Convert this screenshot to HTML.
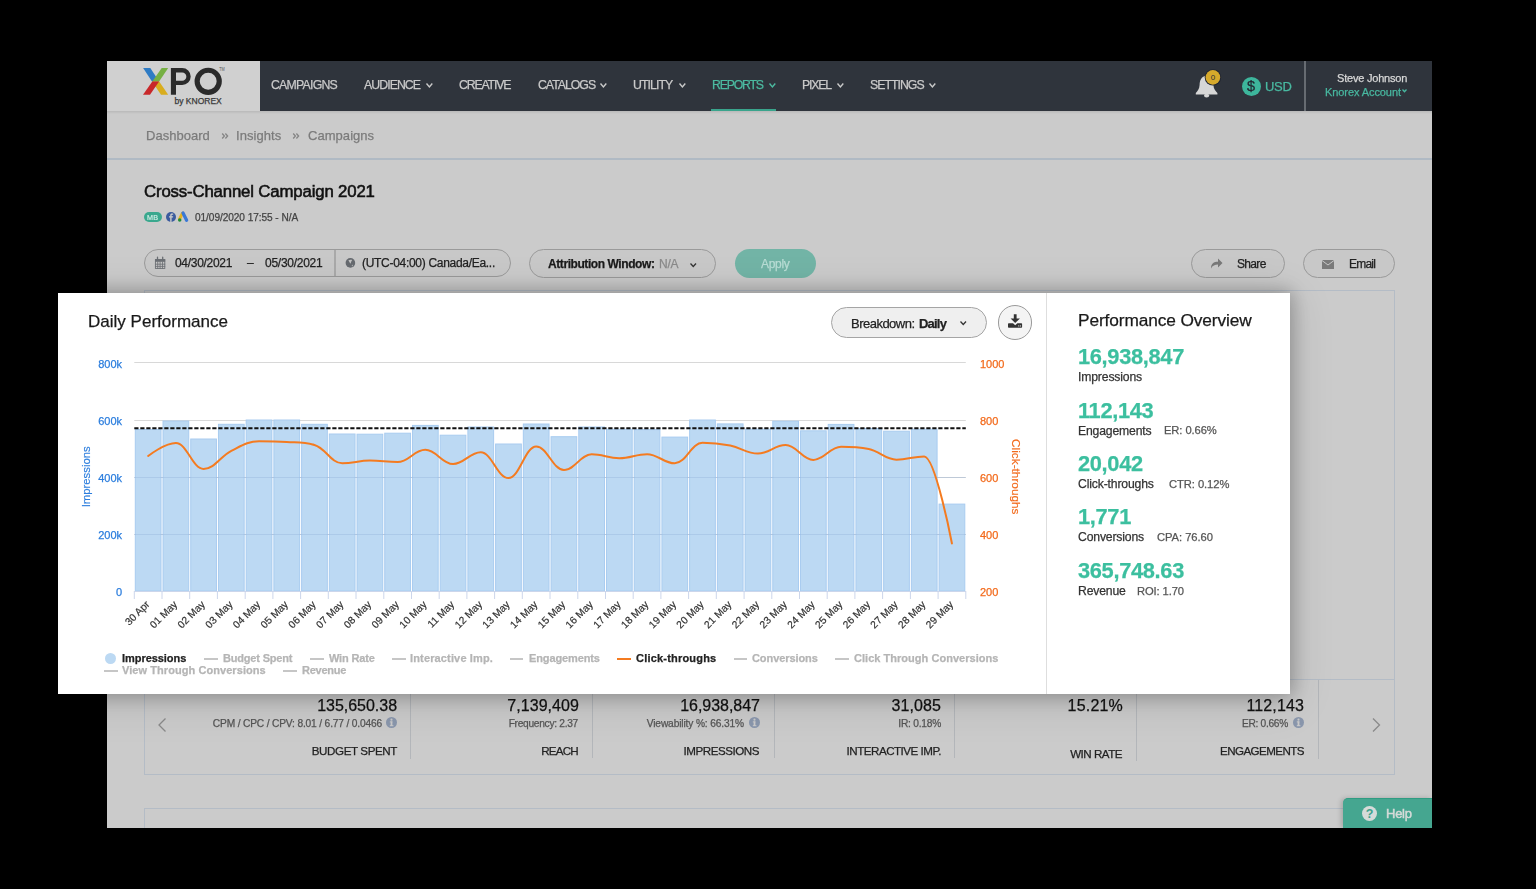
<!DOCTYPE html>
<html><head><meta charset="utf-8">
<style>
*{margin:0;padding:0;box-sizing:border-box}
html,body{width:1536px;height:889px;background:#000;overflow:hidden;font-family:"Liberation Sans",sans-serif;position:relative}
.a{position:absolute}
.t{position:absolute;white-space:nowrap;line-height:1;-webkit-text-stroke-width:0.25px;will-change:transform}
.chev{display:inline-block;width:5px;height:5px;border-right:1.3px solid currentColor;border-bottom:1.3px solid currentColor;transform:rotate(45deg);margin-left:5px;position:relative;top:-3px}
.xl{font-family:"Liberation Sans",sans-serif;font-size:10.3px;fill:#333;stroke:#333;stroke-width:0.2px}
.yl{font-family:"Liberation Sans",sans-serif;font-size:11px;fill:#2b7ddd;stroke:#2b7ddd;stroke-width:0.25px}
.yr{font-family:"Liberation Sans",sans-serif;font-size:11px;fill:#f26a1b;stroke:#f26a1b;stroke-width:0.25px}
.tl{font-family:"Liberation Sans",sans-serif;font-size:11.3px;fill:#2b7ddd;stroke:#2b7ddd;stroke-width:0.15px}
.tr{font-family:"Liberation Sans",sans-serif;font-size:11.8px;fill:#f26a1b;stroke:#f26a1b;stroke-width:0.15px}
</style></head><body>
<div class="a" style="left:107px;top:61px;width:1325px;height:767px;background:#cbcbcb"></div>\n<div class="a" style="left:107px;top:61px;width:153px;height:50px;background:#d0d0d0"></div>\n<div class="a" style="left:107px;top:111px;width:1325px;height:3px;background:linear-gradient(#b9b9b9,#cbcbcb)"></div>\n<div class="a" style="left:260px;top:61px;width:1172px;height:50px;background:#2f343c"></div>\n<svg class="a" style="left:138px;top:62px" width="92" height="46" viewBox="138 62 92 46">
<polygon points="143.1,68 150.3,68 159.2,81.4 152,81.4" fill="#2e7bc4"/>
<polygon points="161.7,68 168.2,68 159.1,81.4 152.3,81.4" fill="#76b043"/>
<polygon points="152,81.4 159.2,81.4 168.2,94.8 161,94.8" fill="#d9ad1e"/>
<polygon points="152.3,81.4 159.1,81.4 150,94.8 143,94.8" fill="#c8282a"/>
<path fill-rule="evenodd" fill="#2b2b2b" d="M170.9,68 H182.2 A8.5,8.5 0 0 1 182.2,85 H176 V94.8 H170.9 Z M176,72.5 H182.2 A4.15,4.15 0 0 1 182.2,80.8 H176 Z"/>
<circle cx="208.2" cy="81.3" r="11.05" fill="none" stroke="#2b2b2b" stroke-width="5.2"/>
<text x="219.3" y="71" font-family="Liberation Sans" font-size="4.5" fill="#555" textLength="5.5" lengthAdjust="spacingAndGlyphs">TM</text>
<text x="174.5" y="104.2" font-family="Liberation Sans" font-size="8.2" fill="#3a3a3a" stroke="#3a3a3a" stroke-width="0.25" textLength="47.3" lengthAdjust="spacingAndGlyphs">by KNOREX</text>
</svg>\n<div class="t" style="top:78.79px;font-size:12.3px;color:#cacaca;letter-spacing:-0.7625000000000011px;left:271.00px;">CAMPAIGNS</div>\n<div class="t" style="top:78.79px;font-size:12.3px;color:#cacaca;letter-spacing:-0.9357142857142853px;left:364.00px;">AUDIENCE</div>\n<svg class="a" style="left:424.5px;top:81.6px" width="8.8" height="6.4" viewBox="-1 -1 8.8 6.4"><path d="M0.5 0.5 L3.40 3.90 L6.30 0.5" fill="none" stroke="#cacaca" stroke-width="1.4"/></svg>\n<div class="t" style="top:78.79px;font-size:12.3px;color:#cacaca;letter-spacing:-1.171428571428572px;left:458.60px;">CREATIVE</div>\n<div class="t" style="top:78.79px;font-size:12.3px;color:#cacaca;letter-spacing:-1.0071428571428578px;left:537.50px;">CATALOGS</div>\n<svg class="a" style="left:599.0px;top:81.6px" width="8.8" height="6.4" viewBox="-1 -1 8.8 6.4"><path d="M0.5 0.5 L3.40 3.90 L6.30 0.5" fill="none" stroke="#cacaca" stroke-width="1.4"/></svg>\n<div class="t" style="top:78.79px;font-size:12.3px;color:#cacaca;letter-spacing:-0.9166666666666666px;left:633.00px;">UTILITY</div>\n<svg class="a" style="left:678.0px;top:81.6px" width="8.8" height="6.4" viewBox="-1 -1 8.8 6.4"><path d="M0.5 0.5 L3.40 3.90 L6.30 0.5" fill="none" stroke="#cacaca" stroke-width="1.4"/></svg>\n<div class="t" style="top:78.79px;font-size:12.3px;color:#4cbba1;letter-spacing:-1.1916666666666664px;left:712.30px;">REPORTS</div>\n<svg class="a" style="left:767.5px;top:81.6px" width="8.8" height="6.4" viewBox="-1 -1 8.8 6.4"><path d="M0.5 0.5 L3.40 3.90 L6.30 0.5" fill="none" stroke="#4cbba1" stroke-width="1.4"/></svg>\n<div class="t" style="top:78.79px;font-size:12.3px;color:#cacaca;letter-spacing:-1.2125000000000004px;left:802.00px;">PIXEL</div>\n<svg class="a" style="left:836.0px;top:81.6px" width="8.8" height="6.4" viewBox="-1 -1 8.8 6.4"><path d="M0.5 0.5 L3.40 3.90 L6.30 0.5" fill="none" stroke="#cacaca" stroke-width="1.4"/></svg>\n<div class="t" style="top:78.79px;font-size:12.3px;color:#cacaca;letter-spacing:-0.9857142857142855px;left:869.80px;">SETTINGS</div>\n<svg class="a" style="left:928.2px;top:81.6px" width="8.8" height="6.4" viewBox="-1 -1 8.8 6.4"><path d="M0.5 0.5 L3.40 3.90 L6.30 0.5" fill="none" stroke="#cacaca" stroke-width="1.4"/></svg>\n<div class="a" style="left:711px;top:108.5px;width:65px;height:2.5px;background:#3aa48c"></div>\n<svg class="a" style="left:1190px;top:64px" width="36" height="36" viewBox="1190 64 36 36">
<path d="M1206.5 76 C1201 76.2 1199.8 80.5 1199.6 85 C1199.4 89 1197.5 91.2 1195.8 93 L1195.8 94.6 L1217.4 94.6 L1217.4 93 C1215.6 91.2 1213.6 89 1213.4 85 C1213.2 80.5 1212 76.2 1206.5 76 Z" fill="#d6d6d6"/>
<ellipse cx="1206.6" cy="95.6" rx="2.6" ry="1.9" fill="#d6d6d6"/>
<circle cx="1212.9" cy="77.4" r="8.2" fill="#1f2430"/>
<circle cx="1212.9" cy="77.4" r="7.3" fill="#d6a92b"/>
<text x="1212.9" y="80.3" font-family="Liberation Sans" font-size="8" fill="#2a2f3a" text-anchor="middle">0</text>
</svg>\n<div class="a" style="left:1242px;top:76.5px;width:19px;height:19px;border-radius:50%;background:#3db69c"></div>\n<div class="t" style="top:79.03px;font-size:14.5px;color:#222831;left:1247.30px;">$</div>\n<div class="t" style="top:79.70px;font-size:13px;color:#49b9a1;letter-spacing:-0.3249999999999993px;left:1264.60px;">USD</div>\n<div class="a" style="left:1304px;top:61px;width:2px;height:50px;background:#676c72"></div>\n<div class="t" style="top:72.69px;font-size:11px;color:#d8d8d8;letter-spacing:-0.1999999999999993px;left:1336.60px;">Steve Johnson</div>\n<div class="t" style="top:86.89px;font-size:11px;color:#48b8a0;letter-spacing:-0.08076923076923055px;left:1324.70px;">Knorex Account</div>\n<svg class="a" style="left:1400.8px;top:87.6px" width="7" height="5.2" viewBox="-1 -1 7 5.2"><path d="M0.5 0.5 L2.50 2.70 L4.50 0.5" fill="none" stroke="#48b8a0" stroke-width="1.3"/></svg>\n<div class="t" style="top:129.10px;font-size:13px;color:#7b7b7b;letter-spacing:0.012500000000000178px;left:146.30px;">Dashboard</div>\n<svg class="a" style="left:220.5px;top:132px" width="8" height="8" viewBox="0 0 8 8"><path d="M1.2 1.5 L3.4 4 L1.2 6.5 M4.4 1.5 L6.6 4 L4.4 6.5" fill="none" stroke="#858585" stroke-width="1.3"/></svg>\n<div class="t" style="top:129.10px;font-size:13px;color:#7b7b7b;letter-spacing:0.05714285714285795px;left:236.30px;">Insights</div>\n<svg class="a" style="left:292px;top:132px" width="8" height="8" viewBox="0 0 8 8"><path d="M1.2 1.5 L3.4 4 L1.2 6.5 M4.4 1.5 L6.6 4 L4.4 6.5" fill="none" stroke="#858585" stroke-width="1.3"/></svg>\n<div class="t" style="top:129.10px;font-size:13px;color:#7b7b7b;letter-spacing:0.04374999999999929px;left:307.90px;">Campaigns</div>\n<div class="a" style="left:107px;top:158px;width:1325px;height:1.5px;background:#b0bac4"></div>\n<div class="t" style="top:184.28px;font-size:16.8px;color:#111;letter-spacing:-0.15961538461538483px;left:144.00px;-webkit-text-stroke-width:0.55px;">Cross-Channel Campaign 2021</div>\n<div class="a" style="left:144px;top:212px;width:18px;height:10px;border-radius:5px;background:#3aa88e"></div>\n<div class="t" style="top:213.61px;font-size:7.2px;color:#d9f0ea;letter-spacing:0.1999999999999993px;left:147.40px;-webkit-text-stroke-width:0.15px;">MB</div>\n<svg class="a" style="left:166px;top:212px" width="10" height="10" viewBox="0 0 10 10"><circle cx="5" cy="5" r="5" fill="#3b5b9e"/><path d="M5.6 10 V5.6 H7 L7.2 4.2 H5.6 V3.4 C5.6 3 5.8 2.8 6.2 2.8 H7.2 V1.5 H5.9 C4.7 1.5 4.2 2.2 4.2 3.2 V4.2 H3 V5.6 H4.2 V10 Z" fill="#cbcbcb"/></svg>\n<svg class="a" style="left:175px;top:209px" width="16" height="15" viewBox="175 209 16 15"><path d="M182.4 213.2 L179.6 219.2" stroke="#e8b21f" stroke-width="3" stroke-linecap="round"/><circle cx="179.7" cy="219.9" r="1.75" fill="#1f8c3b"/><path d="M183 213 L186.6 220.3" stroke="#3a78d6" stroke-width="3.3" stroke-linecap="round"/></svg>\n<div class="t" style="top:212.65px;font-size:10.1px;color:#444;letter-spacing:-0.05952380952380952px;left:194.70px;">01/09/2020 17:55 - N/A</div>\n<div class="a" style="left:144px;top:249px;width:367px;height:28px;border:1px solid #9a9a9a;border-radius:14px;background:#c8c8c8"></div>\n<div class="a" style="left:334px;top:250px;width:2px;height:26px;background:#a9a9a9"></div>\n<svg class="a" style="left:152px;top:255px" width="16" height="16" viewBox="152 255 16 16">
<rect x="155.4" y="259.6" width="9.4" height="8.8" fill="none" stroke="#6b6f74" stroke-width="0.9"/>
<rect x="155" y="259.2" width="10.2" height="2.6" fill="#6b6f74"/>
<path d="M157.5 257.2 V260.2 M162.7 257.2 V260.2" stroke="#6b6f74" stroke-width="1.3" stroke-linecap="round"/>
<path d="M155 264.2 H165.2 M155 266.4 H165.2 M157.7 261.5 V268.8 M160.1 261.5 V268.8 M162.5 261.5 V268.8" stroke="#6b6f74" stroke-width="0.8"/>
</svg>\n<div class="t" style="top:257.24px;font-size:12px;color:#222;letter-spacing:-0.3055555555555556px;left:175.00px;">04/30/2021</div>\n<div class="t" style="top:257.24px;font-size:12px;color:#222;letter-spacing:-1.1000000000000005px;left:246.70px;">–</div>\n<div class="t" style="top:257.24px;font-size:12px;color:#222;letter-spacing:-0.26111111111111046px;left:265.30px;">05/30/2021</div>\n<svg class="a" style="left:344px;top:256px" width="14" height="14" viewBox="344 256 14 14"><circle cx="350.4" cy="262.9" r="4.8" fill="#666a6f"/><path d="M348.4 260.2 C349.5 259.6 351 259.4 352.2 260 L351.3 261.6 L350.5 263.8 L349.5 262.2 Z M351.6 265.5 L353 264.6 L352.5 266.6 Z" fill="#c2c2c2"/></svg>\n<div class="t" style="top:257.24px;font-size:12px;color:#222;letter-spacing:-0.29782608695652274px;left:361.80px;">(UTC-04:00) Canada/Ea...</div>\n<div class="a" style="left:529px;top:249px;width:187px;height:29px;border:1px solid #9a9a9a;border-radius:15px;background:#c8c8c8"></div>\n<div class="t" style="top:258.14px;font-size:12px;color:#1a1a1a;font-weight:bold;letter-spacing:-0.42499999999999954px;left:548.30px;">Attribution Window:</div>\n<div class="t" style="top:258.14px;font-size:12px;color:#8a8a8a;letter-spacing:-0.1999999999999993px;left:658.80px;">N/A</div>\n<svg class="a" style="left:689.0px;top:262.2px" width="8.5" height="6" viewBox="-1 -1 8.5 6"><path d="M0.5 0.5 L3.25 3.50 L6.00 0.5" fill="none" stroke="#333" stroke-width="1.3"/></svg>\n<div class="a" style="left:734.5px;top:249px;width:81px;height:29px;border-radius:15px;background:#72b4a6"></div>\n<div class="t" style="top:258.44px;font-size:12px;color:#b9ddd5;letter-spacing:-0.2999999999999998px;left:760.60px;">Apply</div>\n<div class="a" style="left:1191px;top:249px;width:94px;height:29px;border:1px solid #9a9a9a;border-radius:15px;background:#c8c8c8"></div>\n<svg class="a" style="left:1209.5px;top:258px" width="13" height="11" viewBox="0 0 13 11"><path d="M1 10.5 C1 5.5 3.8 3.8 8 3.8 L8 0.5 L12.5 5 L8 9.5 L8 6.5 C4.8 6.5 2.5 7.5 1 10.5 Z" fill="#787878"/></svg>\n<div class="t" style="top:258.04px;font-size:12px;color:#222;letter-spacing:-0.6749999999999998px;left:1236.50px;">Share</div>\n<div class="a" style="left:1303px;top:249px;width:92px;height:29px;border:1px solid #9a9a9a;border-radius:15px;background:#c8c8c8"></div>\n<svg class="a" style="left:1322px;top:260px" width="12" height="9" viewBox="0 0 12 9"><rect x="0" y="0" width="12" height="9" fill="#7a7a7a"/><path d="M0 0.5 L6 5 L12 0.5" stroke="#c8c8c8" stroke-width="1" fill="none"/></svg>\n<div class="t" style="top:258.04px;font-size:12px;color:#222;letter-spacing:-0.7750000000000004px;left:1348.80px;">Email</div>\n<div class="a" style="left:144px;top:290px;width:1251px;height:485px;border:1px solid #b4bcc6"></div>\n<div class="a" style="left:144px;top:679px;width:1251px;height:1px;background:#b4bcc6"></div>\n<div class="a" style="left:144px;top:808px;width:1251px;height:20px;border:1px solid #b4bcc6;border-bottom:none"></div>\n<svg class="a" style="left:157px;top:717px" width="11" height="16" viewBox="0 0 11 16"><path d="M8.5 1.5 L2 8 L8.5 14.5" stroke="#8a8a8a" stroke-width="1.3" fill="none"/></svg>\n<svg class="a" style="left:1371px;top:716.5px" width="11" height="16" viewBox="0 0 11 16"><path d="M2 1.5 L8.5 8 L2 14.5" stroke="#8a8a8a" stroke-width="1.3" fill="none"/></svg>\n<div class="a" style="left:409.5px;top:680px;width:1px;height:78.5px;background:#b3b6ba"></div>\n<div class="a" style="left:592.2px;top:680px;width:1px;height:78px;background:#b3b6ba"></div>\n<div class="a" style="left:773.6px;top:680px;width:1px;height:78px;background:#b3b6ba"></div>\n<div class="a" style="left:954.4px;top:680px;width:1px;height:78px;background:#b3b6ba"></div>\n<div class="a" style="left:1136.3px;top:680px;width:1px;height:80.5px;background:#b3b6ba"></div>\n<div class="a" style="left:1317.7px;top:680px;width:1px;height:79px;background:#b3b6ba"></div>\n<div class="t" style="top:698.46px;font-size:16px;color:#111;letter-spacing:-0.03333333333333302px;left:-202.86px;width:600px;text-align:right;">135,650.38</div>\n<div class="t" style="top:719.37px;font-size:10.2px;color:#555;letter-spacing:-0.16249999999999984px;left:-218.45px;width:600px;text-align:right;">CPM / CPC / CPV: 8.01 / 6.77 / 0.0466</div>\n<svg class="a" style="left:386.2px;top:717.3px" width="11" height="11" viewBox="0 0 11 11"><circle cx="5.5" cy="5.5" r="5.5" fill="#8a97ad"/><rect x="4.6" y="4.4" width="1.8" height="4.6" fill="#cbcbcb"/><rect x="3.8" y="4.4" width="2.6" height="1" fill="#cbcbcb"/><rect x="3.8" y="8.2" width="3.6" height="1" fill="#cbcbcb"/><circle cx="5.5" cy="2.7" r="1.1" fill="#cbcbcb"/></svg>\n<div class="t" style="top:745.28px;font-size:11.6px;color:#222;letter-spacing:-0.39545454545454495px;left:-203.22px;width:600px;text-align:right;">BUDGET SPENT</div>\n<div class="t" style="top:698.46px;font-size:16px;color:#111;letter-spacing:0.0625px;left:-21.36px;width:600px;text-align:right;">7,139,409</div>\n<div class="t" style="top:719.37px;font-size:10.2px;color:#555;letter-spacing:-0.2857142857142857px;left:-21.68px;width:600px;text-align:right;">Frequency: 2.37</div>\n<div class="t" style="top:745.08px;font-size:11.6px;color:#222;letter-spacing:-0.75px;left:-22.14px;width:600px;text-align:right;">REACH</div>\n<div class="t" style="top:698.46px;font-size:16px;color:#111;letter-spacing:-0.02222222222222096px;left:159.66px;width:600px;text-align:right;">16,938,847</div>\n<div class="t" style="top:719.37px;font-size:10.2px;color:#555;letter-spacing:-0.13250000000000028px;left:144.08px;width:600px;text-align:right;">Viewability %: 66.31%</div>\n<svg class="a" style="left:748.7px;top:717.3px" width="11" height="11" viewBox="0 0 11 11"><circle cx="5.5" cy="5.5" r="5.5" fill="#8a97ad"/><rect x="4.6" y="4.4" width="1.8" height="4.6" fill="#cbcbcb"/><rect x="3.8" y="4.4" width="2.6" height="1" fill="#cbcbcb"/><rect x="3.8" y="8.2" width="3.6" height="1" fill="#cbcbcb"/><circle cx="5.5" cy="2.7" r="1.1" fill="#cbcbcb"/></svg>\n<div class="t" style="top:745.08px;font-size:11.6px;color:#222;letter-spacing:-0.45499999999999974px;left:159.27px;width:600px;text-align:right;">IMPRESSIONS</div>\n<div class="t" style="top:698.46px;font-size:16px;color:#111;letter-spacing:0.10999999999999943px;left:341.40px;width:600px;text-align:right;">31,085</div>\n<div class="t" style="top:719.37px;font-size:10.2px;color:#555;letter-spacing:-0.22499999999999964px;left:341.06px;width:600px;text-align:right;">IR: 0.18%</div>\n<div class="t" style="top:745.08px;font-size:11.6px;color:#222;letter-spacing:-0.48333333333333334px;left:340.84px;width:600px;text-align:right;">INTERACTIVE IMP.</div>\n<div class="t" style="top:698.46px;font-size:16px;color:#111;letter-spacing:0.19000000000000056px;left:522.71px;width:600px;text-align:right;">15.21%</div>\n<div class="t" style="top:747.68px;font-size:11.6px;color:#222;letter-spacing:-0.49285714285714327px;left:522.01px;width:600px;text-align:right;">WIN RATE</div>\n<div class="t" style="top:698.46px;font-size:16px;color:#111;letter-spacing:0.125px;left:704.32px;width:600px;text-align:right;">112,143</div>\n<div class="t" style="top:719.37px;font-size:10.2px;color:#555;letter-spacing:-0.2937500000000002px;left:688.41px;width:600px;text-align:right;">ER: 0.66%</div>\n<svg class="a" style="left:1293.2px;top:717.3px" width="11" height="11" viewBox="0 0 11 11"><circle cx="5.5" cy="5.5" r="5.5" fill="#8a97ad"/><rect x="4.6" y="4.4" width="1.8" height="4.6" fill="#cbcbcb"/><rect x="3.8" y="4.4" width="2.6" height="1" fill="#cbcbcb"/><rect x="3.8" y="8.2" width="3.6" height="1" fill="#cbcbcb"/><circle cx="5.5" cy="2.7" r="1.1" fill="#cbcbcb"/></svg>\n<div class="t" style="top:745.08px;font-size:11.6px;color:#222;letter-spacing:-0.5650000000000006px;left:703.62px;width:600px;text-align:right;">ENGAGEMENTS</div>\n<div class="a" style="left:1342.5px;top:797.5px;width:89.5px;height:30.5px;background:#45a690;border-top:1px solid #2f9c82;border-radius:5px 0 0 0;box-shadow:-2px 0 5px rgba(0,0,0,0.18)"></div>\n<svg class="a" style="left:1361.5px;top:805.5px" width="15" height="15" viewBox="0 0 15 15"><circle cx="7.5" cy="7.5" r="7.5" fill="#d6dbd9"/><text x="7.6" y="12" font-family="Liberation Sans" font-weight="bold" font-size="12.5" fill="#3fa38e" text-anchor="middle">?</text></svg>\n<div class="t" style="top:807.00px;font-size:13px;color:#d6dbd9;letter-spacing:-0.25px;left:1385.70px;-webkit-text-stroke-width:0.45px;">Help</div>\n<div class="a" style="left:58px;top:293px;width:1232px;height:401px;background:#fff;box-shadow:0 0 18px 2px rgba(0,0,0,0.26),0 6px 40px 4px rgba(0,0,0,0.12)"></div>\n<div class="a" style="left:1045.5px;top:293px;width:1px;height:401px;background:#dedede"></div>\n<div class="t" style="top:312.91px;font-size:17px;color:#1a1a1a;letter-spacing:0.009375000000000355px;left:87.50px;">Daily Performance</div>\n<div class="a" style="left:831px;top:307px;width:156px;height:31px;border:1px solid #a5a5a5;border-radius:16px;background:#efefef"></div>\n<div class="t" style="top:316.60px;font-size:13px;color:#222;letter-spacing:-0.5166666666666673px;left:851.10px;">Breakdown:</div>\n<div class="t" style="top:316.60px;font-size:13px;color:#222;font-weight:bold;letter-spacing:-0.7875000000000005px;left:919.10px;">Daily</div>\n<svg class="a" style="left:959.0px;top:320.3px" width="8.5" height="6" viewBox="-1 -1 8.5 6"><path d="M0.5 0.5 L3.25 3.50 L6.00 0.5" fill="none" stroke="#333" stroke-width="1.3"/></svg>\n<div class="a" style="left:998px;top:305.4px;width:34.4px;height:34.4px;border:1px solid #9a9a9a;border-radius:50%;background:#f4f4f4"></div>\n<svg class="a" style="left:1005px;top:311px" width="20" height="20" viewBox="1005 311 20 20">
<path d="M1013.8 314.2 H1016.6 V318.6 H1019.9 L1015.2 322.9 L1010.6 318.6 H1013.8 Z" fill="#333"/>
<path d="M1008.8 323.2 H1013 L1015.2 325.2 L1017.4 323.2 H1021.3 Q1022.1 323.2 1022.1 324 V326.9 Q1022.1 327.7 1021.3 327.7 H1008.8 Q1008 327.7 1008 326.9 V324 Q1008 323.2 1008.8 323.2 Z" fill="#333"/>
<circle cx="1018.8" cy="325.9" r="0.55" fill="#eee"/><circle cx="1020.4" cy="325.9" r="0.55" fill="#eee"/>
</svg>\n<svg class="a" style="left:58px;top:293px" width="988" height="401" viewBox="58 293 988 401"><line x1="134.3" y1="534.5" x2="965.8" y2="534.5" stroke="#d8d8d8" stroke-width="1"/>
<line x1="134.3" y1="477.5" x2="965.8" y2="477.5" stroke="#d8d8d8" stroke-width="1"/>
<line x1="134.3" y1="420.5" x2="965.8" y2="420.5" stroke="#d8d8d8" stroke-width="1"/>
<line x1="134.3" y1="362.5" x2="965.8" y2="362.5" stroke="#d8d8d8" stroke-width="1"/>
<rect x="135.30" y="429.5" width="25.72" height="161.5" fill="#bcd9f3" stroke="#a9ccf0" stroke-width="1"/>
<rect x="163.02" y="421.0" width="25.72" height="170.0" fill="#bcd9f3" stroke="#a9ccf0" stroke-width="1"/>
<rect x="190.73" y="439.0" width="25.72" height="152.0" fill="#bcd9f3" stroke="#a9ccf0" stroke-width="1"/>
<rect x="218.45" y="424.3" width="25.72" height="166.7" fill="#bcd9f3" stroke="#a9ccf0" stroke-width="1"/>
<rect x="246.17" y="420.0" width="25.72" height="171.0" fill="#bcd9f3" stroke="#a9ccf0" stroke-width="1"/>
<rect x="273.88" y="420.0" width="25.72" height="171.0" fill="#bcd9f3" stroke="#a9ccf0" stroke-width="1"/>
<rect x="301.60" y="424.3" width="25.72" height="166.7" fill="#bcd9f3" stroke="#a9ccf0" stroke-width="1"/>
<rect x="329.32" y="434.0" width="25.72" height="157.0" fill="#bcd9f3" stroke="#a9ccf0" stroke-width="1"/>
<rect x="357.03" y="434.2" width="25.72" height="156.8" fill="#bcd9f3" stroke="#a9ccf0" stroke-width="1"/>
<rect x="384.75" y="433.2" width="25.72" height="157.8" fill="#bcd9f3" stroke="#a9ccf0" stroke-width="1"/>
<rect x="412.47" y="425.4" width="25.72" height="165.6" fill="#bcd9f3" stroke="#a9ccf0" stroke-width="1"/>
<rect x="440.18" y="435.2" width="25.72" height="155.8" fill="#bcd9f3" stroke="#a9ccf0" stroke-width="1"/>
<rect x="467.90" y="427.0" width="25.72" height="164.0" fill="#bcd9f3" stroke="#a9ccf0" stroke-width="1"/>
<rect x="495.62" y="444.0" width="25.72" height="147.0" fill="#bcd9f3" stroke="#a9ccf0" stroke-width="1"/>
<rect x="523.33" y="424.0" width="25.72" height="167.0" fill="#bcd9f3" stroke="#a9ccf0" stroke-width="1"/>
<rect x="551.05" y="436.7" width="25.72" height="154.3" fill="#bcd9f3" stroke="#a9ccf0" stroke-width="1"/>
<rect x="578.77" y="427.0" width="25.72" height="164.0" fill="#bcd9f3" stroke="#a9ccf0" stroke-width="1"/>
<rect x="606.48" y="429.3" width="25.72" height="161.7" fill="#bcd9f3" stroke="#a9ccf0" stroke-width="1"/>
<rect x="634.20" y="429.6" width="25.72" height="161.4" fill="#bcd9f3" stroke="#a9ccf0" stroke-width="1"/>
<rect x="661.92" y="437.1" width="25.72" height="153.9" fill="#bcd9f3" stroke="#a9ccf0" stroke-width="1"/>
<rect x="689.63" y="420.0" width="25.72" height="171.0" fill="#bcd9f3" stroke="#a9ccf0" stroke-width="1"/>
<rect x="717.35" y="423.9" width="25.72" height="167.1" fill="#bcd9f3" stroke="#a9ccf0" stroke-width="1"/>
<rect x="745.07" y="429.2" width="25.72" height="161.8" fill="#bcd9f3" stroke="#a9ccf0" stroke-width="1"/>
<rect x="772.78" y="421.2" width="25.72" height="169.8" fill="#bcd9f3" stroke="#a9ccf0" stroke-width="1"/>
<rect x="800.50" y="430.8" width="25.72" height="160.2" fill="#bcd9f3" stroke="#a9ccf0" stroke-width="1"/>
<rect x="828.22" y="424.4" width="25.72" height="166.6" fill="#bcd9f3" stroke="#a9ccf0" stroke-width="1"/>
<rect x="855.93" y="428.5" width="25.72" height="162.5" fill="#bcd9f3" stroke="#a9ccf0" stroke-width="1"/>
<rect x="883.65" y="431.2" width="25.72" height="159.8" fill="#bcd9f3" stroke="#a9ccf0" stroke-width="1"/>
<rect x="911.37" y="429.2" width="25.72" height="161.8" fill="#bcd9f3" stroke="#a9ccf0" stroke-width="1"/>
<rect x="939.08" y="504.1" width="25.72" height="86.9" fill="#bcd9f3" stroke="#a9ccf0" stroke-width="1"/>
<line x1="134.3" y1="534.5" x2="965.8" y2="534.5" stroke="#8fb0d6" stroke-opacity="0.35" stroke-width="1"/>
<line x1="134.3" y1="477.5" x2="965.8" y2="477.5" stroke="#8fb0d6" stroke-opacity="0.35" stroke-width="1"/>
<line x1="134.3" y1="591.5" x2="965.8" y2="591.5" stroke="#ccd6eb" stroke-width="1"/>
<line x1="134.3" y1="591" x2="134.3" y2="599" stroke="#ccd6eb" stroke-width="1"/>
<line x1="162.0" y1="591" x2="162.0" y2="599" stroke="#ccd6eb" stroke-width="1"/>
<line x1="189.7" y1="591" x2="189.7" y2="599" stroke="#ccd6eb" stroke-width="1"/>
<line x1="217.4" y1="591" x2="217.4" y2="599" stroke="#ccd6eb" stroke-width="1"/>
<line x1="245.2" y1="591" x2="245.2" y2="599" stroke="#ccd6eb" stroke-width="1"/>
<line x1="272.9" y1="591" x2="272.9" y2="599" stroke="#ccd6eb" stroke-width="1"/>
<line x1="300.6" y1="591" x2="300.6" y2="599" stroke="#ccd6eb" stroke-width="1"/>
<line x1="328.3" y1="591" x2="328.3" y2="599" stroke="#ccd6eb" stroke-width="1"/>
<line x1="356.0" y1="591" x2="356.0" y2="599" stroke="#ccd6eb" stroke-width="1"/>
<line x1="383.8" y1="591" x2="383.8" y2="599" stroke="#ccd6eb" stroke-width="1"/>
<line x1="411.5" y1="591" x2="411.5" y2="599" stroke="#ccd6eb" stroke-width="1"/>
<line x1="439.2" y1="591" x2="439.2" y2="599" stroke="#ccd6eb" stroke-width="1"/>
<line x1="466.9" y1="591" x2="466.9" y2="599" stroke="#ccd6eb" stroke-width="1"/>
<line x1="494.6" y1="591" x2="494.6" y2="599" stroke="#ccd6eb" stroke-width="1"/>
<line x1="522.3" y1="591" x2="522.3" y2="599" stroke="#ccd6eb" stroke-width="1"/>
<line x1="550.0" y1="591" x2="550.0" y2="599" stroke="#ccd6eb" stroke-width="1"/>
<line x1="577.8" y1="591" x2="577.8" y2="599" stroke="#ccd6eb" stroke-width="1"/>
<line x1="605.5" y1="591" x2="605.5" y2="599" stroke="#ccd6eb" stroke-width="1"/>
<line x1="633.2" y1="591" x2="633.2" y2="599" stroke="#ccd6eb" stroke-width="1"/>
<line x1="660.9" y1="591" x2="660.9" y2="599" stroke="#ccd6eb" stroke-width="1"/>
<line x1="688.6" y1="591" x2="688.6" y2="599" stroke="#ccd6eb" stroke-width="1"/>
<line x1="716.3" y1="591" x2="716.3" y2="599" stroke="#ccd6eb" stroke-width="1"/>
<line x1="744.1" y1="591" x2="744.1" y2="599" stroke="#ccd6eb" stroke-width="1"/>
<line x1="771.8" y1="591" x2="771.8" y2="599" stroke="#ccd6eb" stroke-width="1"/>
<line x1="799.5" y1="591" x2="799.5" y2="599" stroke="#ccd6eb" stroke-width="1"/>
<line x1="827.2" y1="591" x2="827.2" y2="599" stroke="#ccd6eb" stroke-width="1"/>
<line x1="854.9" y1="591" x2="854.9" y2="599" stroke="#ccd6eb" stroke-width="1"/>
<line x1="882.6" y1="591" x2="882.6" y2="599" stroke="#ccd6eb" stroke-width="1"/>
<line x1="910.4" y1="591" x2="910.4" y2="599" stroke="#ccd6eb" stroke-width="1"/>
<line x1="938.1" y1="591" x2="938.1" y2="599" stroke="#ccd6eb" stroke-width="1"/>
<line x1="965.8" y1="591" x2="965.8" y2="599" stroke="#ccd6eb" stroke-width="1"/>
<line x1="134.3" y1="428.2" x2="965.8" y2="428.2" stroke="#111" stroke-width="2" stroke-dasharray="4.2 1.8"/>
<path d="M 148.16 456.00 C 148.16 456.00 164.79 443.00 175.88 443.00 C 186.96 443.00 192.50 469.00 203.59 469.00 C 214.68 469.00 220.22 456.34 231.31 450.80 C 242.39 445.26 247.94 441.30 259.02 441.30 C 270.11 441.30 275.66 441.30 286.74 442.00 C 297.83 442.70 303.37 442.00 314.46 445.00 C 325.55 448.00 331.09 463.30 342.18 463.30 C 353.26 463.30 358.81 460.50 369.89 460.50 C 380.98 460.50 386.52 462.10 397.61 462.10 C 408.69 462.10 414.24 449.80 425.32 449.80 C 436.41 449.80 441.96 464.00 453.04 464.00 C 464.13 464.00 469.67 452.30 480.76 452.30 C 491.84 452.30 497.39 478.10 508.47 478.10 C 519.56 478.10 525.10 446.50 536.19 446.50 C 547.28 446.50 552.82 470.00 563.91 470.00 C 575.00 470.00 580.54 454.30 591.62 454.30 C 602.71 454.30 608.25 458.20 619.34 458.20 C 630.43 458.20 635.97 454.20 647.06 454.20 C 658.15 454.20 663.69 463.30 674.78 463.30 C 685.86 463.30 691.40 442.80 702.49 442.80 C 713.58 442.80 719.12 443.46 730.21 445.60 C 741.29 447.74 746.84 453.50 757.92 453.50 C 769.01 453.50 774.56 445.10 785.64 445.10 C 796.73 445.10 802.27 459.90 813.36 459.90 C 824.45 459.90 829.99 446.70 841.08 446.70 C 852.16 446.70 857.70 446.70 868.79 449.00 C 879.88 451.30 885.42 459.70 896.51 459.70 C 907.59 459.70 913.14 456.50 924.22 456.50 C 935.31 456.50 951.94 543.50 951.94 543.50" fill="none" stroke="#f47b20" stroke-width="2" stroke-linejoin="round" stroke-linecap="round"/>
<text x="150.2" y="605" transform="rotate(-45 150.2 605)" text-anchor="end" class="xl">30 Apr</text>
<text x="177.9" y="605" transform="rotate(-45 177.9 605)" text-anchor="end" class="xl">01 May</text>
<text x="205.6" y="605" transform="rotate(-45 205.6 605)" text-anchor="end" class="xl">02 May</text>
<text x="233.3" y="605" transform="rotate(-45 233.3 605)" text-anchor="end" class="xl">03 May</text>
<text x="261.0" y="605" transform="rotate(-45 261.0 605)" text-anchor="end" class="xl">04 May</text>
<text x="288.7" y="605" transform="rotate(-45 288.7 605)" text-anchor="end" class="xl">05 May</text>
<text x="316.5" y="605" transform="rotate(-45 316.5 605)" text-anchor="end" class="xl">06 May</text>
<text x="344.2" y="605" transform="rotate(-45 344.2 605)" text-anchor="end" class="xl">07 May</text>
<text x="371.9" y="605" transform="rotate(-45 371.9 605)" text-anchor="end" class="xl">08 May</text>
<text x="399.6" y="605" transform="rotate(-45 399.6 605)" text-anchor="end" class="xl">09 May</text>
<text x="427.3" y="605" transform="rotate(-45 427.3 605)" text-anchor="end" class="xl">10 May</text>
<text x="455.0" y="605" transform="rotate(-45 455.0 605)" text-anchor="end" class="xl">11 May</text>
<text x="482.8" y="605" transform="rotate(-45 482.8 605)" text-anchor="end" class="xl">12 May</text>
<text x="510.5" y="605" transform="rotate(-45 510.5 605)" text-anchor="end" class="xl">13 May</text>
<text x="538.2" y="605" transform="rotate(-45 538.2 605)" text-anchor="end" class="xl">14 May</text>
<text x="565.9" y="605" transform="rotate(-45 565.9 605)" text-anchor="end" class="xl">15 May</text>
<text x="593.6" y="605" transform="rotate(-45 593.6 605)" text-anchor="end" class="xl">16 May</text>
<text x="621.3" y="605" transform="rotate(-45 621.3 605)" text-anchor="end" class="xl">17 May</text>
<text x="649.1" y="605" transform="rotate(-45 649.1 605)" text-anchor="end" class="xl">18 May</text>
<text x="676.8" y="605" transform="rotate(-45 676.8 605)" text-anchor="end" class="xl">19 May</text>
<text x="704.5" y="605" transform="rotate(-45 704.5 605)" text-anchor="end" class="xl">20 May</text>
<text x="732.2" y="605" transform="rotate(-45 732.2 605)" text-anchor="end" class="xl">21 May</text>
<text x="759.9" y="605" transform="rotate(-45 759.9 605)" text-anchor="end" class="xl">22 May</text>
<text x="787.6" y="605" transform="rotate(-45 787.6 605)" text-anchor="end" class="xl">23 May</text>
<text x="815.4" y="605" transform="rotate(-45 815.4 605)" text-anchor="end" class="xl">24 May</text>
<text x="843.1" y="605" transform="rotate(-45 843.1 605)" text-anchor="end" class="xl">25 May</text>
<text x="870.8" y="605" transform="rotate(-45 870.8 605)" text-anchor="end" class="xl">26 May</text>
<text x="898.5" y="605" transform="rotate(-45 898.5 605)" text-anchor="end" class="xl">27 May</text>
<text x="926.2" y="605" transform="rotate(-45 926.2 605)" text-anchor="end" class="xl">28 May</text>
<text x="953.9" y="605" transform="rotate(-45 953.9 605)" text-anchor="end" class="xl">29 May</text>
<text x="122" y="596.0" text-anchor="end" class="yl">0</text>
<text x="122" y="539.0" text-anchor="end" class="yl">200k</text>
<text x="122" y="482.0" text-anchor="end" class="yl">400k</text>
<text x="122" y="425.0" text-anchor="end" class="yl">600k</text>
<text x="122" y="368.0" text-anchor="end" class="yl">800k</text>
<text x="980" y="596.0" class="yr">200</text>
<text x="980" y="539.0" class="yr">400</text>
<text x="980" y="482.0" class="yr">600</text>
<text x="980" y="425.0" class="yr">800</text>
<text x="980" y="368.0" class="yr">1000</text>
<text x="90.2" y="476.8" transform="rotate(-90 90.2 476.8)" text-anchor="middle" class="tl">Impressions</text>
<text x="1012.2" y="476.8" transform="rotate(90 1012.2 476.8)" text-anchor="middle" class="tr">Click-throughs</text></svg>\n<div class="a" style="left:105px;top:652.7px;width:11px;height:11px;border-radius:50%;background:#bcd9f3"></div>\n<div class="t" style="top:653.29px;font-size:11px;color:#222;font-weight:bold;letter-spacing:-0.05px;left:122.00px;">Impressions</div>\n<div class="a" style="left:204.3px;top:658.2px;width:13.5px;height:1.6px;background:#c6c6c6"></div>\n<div class="t" style="top:653.29px;font-size:11px;color:#b5b5b5;font-weight:bold;letter-spacing:-0.18181818181818182px;left:223.20px;">Budget Spent</div>\n<div class="a" style="left:310px;top:658.2px;width:13.5px;height:1.6px;background:#c6c6c6"></div>\n<div class="t" style="top:653.29px;font-size:11px;color:#b5b5b5;font-weight:bold;letter-spacing:-0.1642857142857151px;left:328.60px;">Win Rate</div>\n<div class="a" style="left:391.5px;top:658.2px;width:14.399999999999977px;height:1.6px;background:#c6c6c6"></div>\n<div class="t" style="top:653.29px;font-size:11px;color:#b5b5b5;font-weight:bold;letter-spacing:0.14666666666666686px;left:410.40px;">Interactive Imp.</div>\n<div class="a" style="left:509.8px;top:658.2px;width:13.499999999999943px;height:1.6px;background:#c6c6c6"></div>\n<div class="t" style="top:653.29px;font-size:11px;color:#b5b5b5;font-weight:bold;letter-spacing:-0.11500000000000057px;left:528.70px;">Engagements</div>\n<div class="a" style="left:617.1px;top:658.2px;width:13.799999999999955px;height:1.6px;background:#f47b20"></div>\n<div class="t" style="top:653.29px;font-size:11px;color:#222;font-weight:bold;letter-spacing:0.20000000000000065px;left:635.80px;">Click-throughs</div>\n<div class="a" style="left:733.7px;top:658.2px;width:13.799999999999955px;height:1.6px;background:#c6c6c6"></div>\n<div class="t" style="top:653.29px;font-size:11px;color:#b5b5b5;font-weight:bold;letter-spacing:-0.08500000000000085px;left:752.00px;">Conversions</div>\n<div class="a" style="left:835.3px;top:658.2px;width:13.700000000000045px;height:1.6px;background:#c6c6c6"></div>\n<div class="t" style="top:653.29px;font-size:11px;color:#b5b5b5;font-weight:bold;letter-spacing:0.03125px;left:853.60px;">Click Through Conversions</div>\n<div class="a" style="left:104px;top:670.4px;width:13.5px;height:1.6px;background:#c6c6c6"></div>\n<div class="t" style="top:665.49px;font-size:11px;color:#b5b5b5;font-weight:bold;letter-spacing:0.06521739130434782px;left:122.00px;">View Through Conversions</div>\n<div class="a" style="left:283px;top:670.4px;width:13.600000000000023px;height:1.6px;background:#c6c6c6"></div>\n<div class="t" style="top:665.49px;font-size:11px;color:#b5b5b5;font-weight:bold;letter-spacing:-0.24166666666666714px;left:301.60px;">Revenue</div>\n<div class="t" style="top:311.56px;font-size:17.3px;color:#1a1a1a;letter-spacing:-0.11052631578947339px;left:1077.70px;">Performance Overview</div>\n<div class="t" style="top:346.15px;font-size:21.8px;color:#3cbf9f;font-weight:bold;letter-spacing:-0.3111111111111108px;left:1077.70px;">16,938,847</div>\n<div class="t" style="top:370.67px;font-size:12.2px;color:#333;letter-spacing:-0.15499999999999972px;left:1077.70px;">Impressions</div>\n<div class="t" style="top:399.65px;font-size:21.8px;color:#3cbf9f;font-weight:bold;letter-spacing:-0.31111111111111px;left:1077.70px;">112,143</div>\n<div class="t" style="top:424.67px;font-size:12.2px;color:#333;letter-spacing:-0.15499999999999972px;left:1077.70px;">Engagements</div>\n<div class="t" style="top:425.22px;font-size:11.2px;color:#555;letter-spacing:-0.09375px;left:1163.80px;">ER: 0.66%</div>\n<div class="t" style="top:453.30px;font-size:21.8px;color:#3cbf9f;font-weight:bold;letter-spacing:-0.31111111111111145px;left:1077.70px;">20,042</div>\n<div class="t" style="top:478.17px;font-size:12.2px;color:#333;letter-spacing:-0.15500000000000005px;left:1077.70px;">Click-throughs</div>\n<div class="t" style="top:478.72px;font-size:11.2px;color:#555;letter-spacing:-0.06666666666666682px;left:1168.80px;">CTR: 0.12%</div>\n<div class="t" style="top:505.95px;font-size:21.8px;color:#3cbf9f;font-weight:bold;letter-spacing:-0.31111111111111px;left:1077.70px;">1,771</div>\n<div class="t" style="top:531.27px;font-size:12.2px;color:#333;letter-spacing:-0.15499999999999972px;left:1077.70px;">Conversions</div>\n<div class="t" style="top:531.82px;font-size:11.2px;color:#555;letter-spacing:-0.050000000000000315px;left:1157.00px;">CPA: 76.60</div>\n<div class="t" style="top:559.55px;font-size:21.8px;color:#3cbf9f;font-weight:bold;letter-spacing:-0.3111111111111108px;left:1077.70px;">365,748.63</div>\n<div class="t" style="top:585.47px;font-size:12.2px;color:#333;letter-spacing:-0.15499999999999994px;left:1077.70px;">Revenue</div>\n<div class="t" style="top:586.02px;font-size:11.2px;color:#555;letter-spacing:-0.10625000000000018px;left:1136.80px;">ROI: 1.70</div>
</body></html>
